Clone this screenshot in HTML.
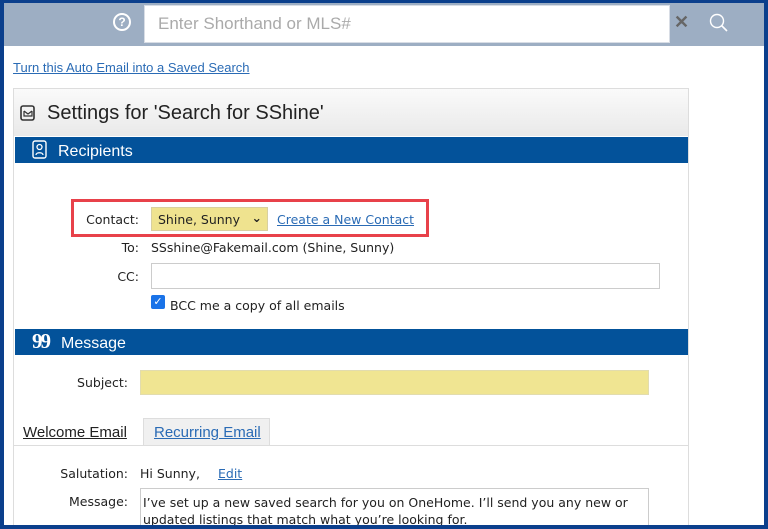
<!DOCTYPE html>
<html style="overflow:hidden;width:768px;height:529px"><head><style>
*{margin:0;padding:0;box-sizing:border-box}
body{width:768px;height:529px;overflow:hidden;background:#fff;font-family:"DejaVu Sans","Liberation Sans",sans-serif;position:relative}
.a{position:absolute}
.frame{left:0;top:0;width:768px;height:529px;border:4px solid #0b3f8c;border-top-width:3px;z-index:10;pointer-events:none}
.lbl{font-size:12.5px;color:#222;text-align:right}
.bar{background:#03529a;color:#fff;font-size:15px;font-family:"Liberation Sans",sans-serif}
</style></head><body>
<div class="a" style="left:0;top:0;width:768px;height:46px;background:#9daec3"></div>
<div class="a" style="left:113px;top:13px;width:18px;height:18px;border:2px solid #fff;border-radius:50%;color:#fff;font-size:12px;font-weight:bold;text-align:center;line-height:14px;font-family:'Liberation Sans',sans-serif">?</div>
<div class="a" style="left:144px;top:5px;width:526px;height:38px;background:#fff;border:1px solid #d8dde5"></div>
<div class="a" style="left:158px;top:14px;font-size:17px;color:#aaa;font-family:'Liberation Sans',sans-serif">Enter Shorthand or MLS#</div>
<div class="a" style="left:674px;top:12px;font-size:18px;color:#666;font-weight:bold;font-family:'Liberation Sans',sans-serif">✕</div>
<svg class="a" style="left:708px;top:12px" width="22" height="22"><circle cx="9" cy="9" r="6.5" stroke="#fff" stroke-width="1.4" fill="none"/><line x1="13.5" y1="13.5" x2="19" y2="19" stroke="#fff" stroke-width="1.6"/></svg>
<div class="a" style="left:13px;top:60px;font-size:13px;color:#2a6bb5;text-decoration:underline;font-family:'Liberation Sans',sans-serif">Turn this Auto Email into a Saved Search</div>
<div class="a" style="left:13px;top:88px;width:676px;height:441px;border:1px solid #ddd"></div>
<div class="a" style="left:14px;top:89px;width:674px;height:47px;background:linear-gradient(#fafafa,#e9e9e9)"></div>
<svg class="a" style="left:20px;top:105px" width="16" height="17"><rect x="1" y="1" width="13" height="14" rx="2" fill="none" stroke="#333" stroke-width="1.6"/><path d="M4 6l4 3 4-3M4 6v5h8V6" fill="none" stroke="#333" stroke-width="1.2"/></svg>
<div class="a" style="left:47px;top:102px;font-size:20px;color:#222;font-family:'Liberation Sans',sans-serif">Settings for 'Search for SShine'</div>
<div class="a bar" style="left:15px;top:137px;width:673px;height:26px"></div>
<svg class="a" style="left:31px;top:140px" width="18" height="20"><rect x="2" y="1" width="13" height="17" rx="2" fill="none" stroke="#fff" stroke-width="1.4"/><circle cx="8.5" cy="7" r="2.5" fill="none" stroke="#fff" stroke-width="1.3"/><path d="M5 15c0-3 7-3 7 0" fill="none" stroke="#fff" stroke-width="1.3"/></svg>
<div class="a" style="left:58px;top:143px;font-size:16px;color:#fff;font-family:'Liberation Sans',sans-serif">Recipients</div>
<div class="a" style="left:71px;top:199px;width:358px;height:38px;border:3px solid #e8414a"></div>
<div class="a lbl" style="left:60px;top:212px;width:79px">Contact:</div>
<div class="a" style="left:151px;top:207px;width:117px;height:24px;background:#efe38f;border:1px solid #d8d0a0;font-size:12.5px;padding:4px 6px;color:#222">Shine, Sunny <span style="position:absolute;right:5px;top:2px;font-weight:bold">⌄</span></div>
<div class="a" style="left:277px;top:212px;font-size:12.5px;color:#2a6bb5;text-decoration:underline">Create a New Contact</div>
<div class="a lbl" style="left:60px;top:240px;width:79px">To:</div>
<div class="a" style="left:151px;top:240px;font-size:12.5px;color:#222">SSshine@Fakemail.com (Shine, Sunny)</div>
<div class="a lbl" style="left:60px;top:269px;width:79px">CC:</div>
<div class="a" style="left:151px;top:263px;width:509px;height:26px;border:1px solid #ccc"></div>
<div class="a" style="left:151px;top:295px;width:14px;height:14px;background:#1a73e8;border-radius:2px;color:#fff;font-size:11px;line-height:14px;text-align:center">✓</div>
<div class="a" style="left:170px;top:298px;font-size:12.5px;color:#222">BCC me a copy of all emails</div>
<div class="a bar" style="left:15px;top:329px;width:673px;height:26px"></div>
<div class="a" style="left:32px;top:329px;font-size:21px;color:#fff;font-weight:bold;font-family:'Liberation Serif',serif;letter-spacing:-2px">99</div>
<div class="a" style="left:61px;top:335px;font-size:16px;color:#fff;font-family:'Liberation Sans',sans-serif">Message</div>
<div class="a lbl" style="left:50px;top:375px;width:78px">Subject:</div>
<div class="a" style="left:140px;top:370px;width:509px;height:25px;background:#f0e592;border:1px solid #e2dcae"></div>
<div class="a" style="left:14px;top:445px;width:674px;height:1px;background:#ddd"></div>
<div class="a" style="left:143px;top:418px;width:127px;height:27px;background:#f0f0f0;border:1px solid #ddd;border-bottom:none"></div>
<div class="a" style="left:23px;top:424px;font-size:15px;color:#222;text-decoration:underline;font-family:'Liberation Sans',sans-serif">Welcome Email</div>
<div class="a" style="left:154px;top:424px;font-size:15px;color:#2a6bb5;text-decoration:underline;font-family:'Liberation Sans',sans-serif">Recurring Email</div>
<div class="a lbl" style="left:40px;top:466px;width:88px">Salutation:</div>
<div class="a" style="left:140px;top:466px;font-size:12.5px;color:#222">Hi Sunny,</div>
<div class="a" style="left:218px;top:466px;font-size:12.5px;color:#2a6bb5;text-decoration:underline">Edit</div>
<div class="a lbl" style="left:40px;top:494px;width:88px">Message:</div>
<div class="a" style="left:140px;top:488px;width:509px;height:41px;border:1px solid #ccc;font-size:12.5px;color:#222;padding:5px 2px;line-height:17px;overflow:hidden">I’ve set up a new saved search for you on OneHome. I’ll send you any new or updated listings that match what you’re looking for.</div>
<div class="a frame"></div>
</body></html>
